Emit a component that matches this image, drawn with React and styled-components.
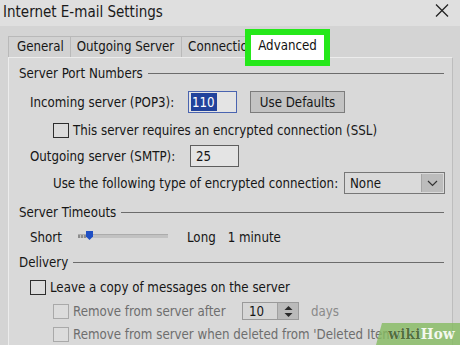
import React from 'react';
import styled, { createGlobalStyle } from 'styled-components';

const Global = createGlobalStyle`
	html, body {
		margin: 0;
		padding: 0;
		background: #d6d6d6;
	}
	body {
		font-family: "DejaVu Sans Condensed", "DejaVu Sans", sans-serif;
		font-stretch: condensed;
		font-size: 13.2px;
		color: #161616;
	}
`;

const Close = () => (
	<svg width="14" height="13" viewBox="0 0 14 13">
		<path d="M1 0.5 L13 12.5 M13 0.5 L1 12.5" stroke="#222" strokeWidth="1.3" fill="none" />
	</svg>
);

const Chevron = () => (
	<svg width="11" height="7" viewBox="0 0 11 7">
		<path d="M1 1 L5.5 5.5 L10 1" stroke="#333" strokeWidth="1.2" fill="none" />
	</svg>
);

const App = () => {
	return (
		<Window>
			<Global />
			<TitleBar>
				<Title>Internet E-mail Settings</Title>
				<CloseBtn>
					<Close />
				</CloseBtn>
			</TitleBar>

			<TabStrip>
				<Tab $pl={8} $pr={6}>General</Tab>
				<Tab $pl={6} $pr={7}>Outgoing Server</Tab>
				<Tab $pl={6} $pr={7}>Connection</Tab>
				<ActiveTab>Advanced</ActiveTab>
			</TabStrip>

			<Panel>
				<Legend>
					<span>Server Port Numbers</span>
					<Rule />
				</Legend>

				<Row $gap={7} $indent={11}>
					<Label $w={158}>Incoming server (POP3):</Label>
					<TextBox $w={49} $focused>
						<Selected>110</Selected>
					</TextBox>
					<Button>Use Defaults</Button>
				</Row>

				<Row $gap={6} $indent={34}>
					<Check />
					<CheckLabel>This server requires an encrypted connection (SSL)</CheckLabel>
				</Row>

				<Row $gap={4} $indent={11}>
					<Label $w={160}>Outgoing server (SMTP):</Label>
					<TextBox $w={49}>25</TextBox>
				</Row>

				<Row $gap={5} $indent={34}>
					<Label $w={291}>Use the following type of encrypted connection:</Label>
					<Select>
						<span>None</span>
						<DropBtn>
							<Chevron />
						</DropBtn>
					</Select>
				</Row>

				<Legend $gap={7}>
					<span>Server Timeouts</span>
					<Rule />
				</Legend>

				<Row $gap={3} $indent={11}>
					<Label $w={48}>Short</Label>
					<Slider>
						<Ticks />
						<Thumb $pos={8}>
							<svg width="7" height="9" viewBox="0 0 7 9">
								<path d="M0 0 H7 V5.5 L3.5 9 L0 5.5 Z" fill="#1f4fc4" />
							</svg>
						</Thumb>
					</Slider>
					<Label $ml={19}>Long</Label>
					<Label $ml={12}>1 minute</Label>
				</Row>

				<Legend $gap={3}>
					<span>Delivery</span>
					<Rule />
				</Legend>

				<Row $gap={3} $indent={11}>
					<Check />
					<CheckLabel>Leave a copy of messages on the server</CheckLabel>
				</Row>

				<Row $gap={2} $indent={34}>
					<Check $disabled />
					<CheckLabel $disabled $w={169}>
						Remove from server after
					</CheckLabel>
					<Spin>
						<span>10</span>
						<SpinBtns>
							<svg width="9" height="13" viewBox="0 0 9 13">
								<path d="M4.5 1 L8.5 5 H0.5 Z M4.5 12 L8.5 8 H0.5 Z" fill="#2a2a2a" />
							</svg>
						</SpinBtns>
					</Spin>
					<Faint>days</Faint>
				</Row>

				<Row $gap={1} $indent={34}>
					<Check $disabled />
					<CheckLabel $disabled>Remove from server when deleted from 'Deleted Items'</CheckLabel>
				</Row>
			</Panel>

			<Watermark>
				<b className="wiki">wiki</b>
				<b className="how">How</b>
			</Watermark>
		</Window>
	);
};

export default App;

const Window = styled.div`
	position: relative;
	width: 460px;
	height: 345px;
	overflow: hidden;
	display: flex;
	flex-direction: column;
	background: #d4d4d4;
`;

const TitleBar = styled.div`
	height: 26px;
	flex-shrink: 0;
	display: flex;
	align-items: center;
	padding: 0 11px 0 3px;
	background: #dfdfdf;
`;

const Title = styled.div`
	font-size: 15px;
	color: #1a1a1a;
	margin-top: -2px;
`;

const CloseBtn = styled.div`
	margin-left: auto;
	display: flex;
	margin-top: -5px;
`;

const TabStrip = styled.div`
	height: 31px;
	flex-shrink: 0;
	display: flex;
	align-items: flex-end;
	padding-left: 8px;
`;

const Tab = styled.div`
	box-sizing: border-box;
	height: 21px;
	display: flex;
	align-items: center;
	padding: 0 ${p => p.$pr}px 1px ${p => p.$pl}px;
	margin-right: -1px;
	background: #d2d2d2;
	border: solid 1px #b9b9b9;
	border-bottom: none;
	white-space: nowrap;
`;

const ActiveTab = styled.div`
	position: relative;
	z-index: 2;
	box-sizing: border-box;
	height: 37px;
	margin-left: -17px;
	margin-bottom: -9px;
	padding: 2px 7px 0 7px;
	background: #ffffff;
	border: solid 6px #25e81a;
	line-height: 18px;
	color: #111;
`;

const Panel = styled.div`
	flex: 1;
	margin: 0 7px 0 8px;
	padding: 4px 0 0 10px;
	background: #d9d9d9;
	border: solid 1px #ececec;
	border-right-color: #bdbdbd;
	border-bottom: none;
	display: flex;
	flex-direction: column;
`;

const Row = styled.div`
	height: 22px;
	flex-shrink: 0;
	display: flex;
	align-items: center;
	margin-top: ${p => p.$gap || 0}px;
	padding-left: ${p => p.$indent || 0}px;
	white-space: nowrap;
`;

const Legend = styled(Row)`
	padding-right: 8px;
`;

const Rule = styled.div`
	flex: 1;
	height: 1px;
	margin-left: 5px;
	background: #6c6c6c;
`;

const Label = styled.div`
	width: ${p => (p.$w ? `${p.$w}px` : 'auto')};
	margin-left: ${p => p.$ml || 0}px;
	flex-shrink: 0;
`;

const TextBox = styled.div`
	box-sizing: border-box;
	width: ${p => p.$w}px;
	height: 22px;
	display: flex;
	align-items: center;
	padding-left: ${p => (p.$focused ? 2 : 5)}px;
	background: #e4e4e4;
	border: solid 1px ${p => (p.$focused ? '#4a64b0' : '#5e5e5e')};
`;

const Selected = styled.span`
	display: flex;
	align-items: center;
	height: 18px;
	padding: 0 2px 0 1px;
	background: #22439c;
	color: #fff;
`;

const Button = styled.div`
	box-sizing: border-box;
	width: 95px;
	height: 22px;
	margin-left: 13px;
	display: flex;
	align-items: center;
	justify-content: center;
	background: #c3c3c3;
	border: solid 1px #7c7c7c;
`;

const Check = styled.div`
	box-sizing: border-box;
	width: 16px;
	height: 15px;
	flex-shrink: 0;
	background: #dcdcdc;
	border: solid 1px ${p => (p.$disabled ? '#a9a9a9' : '#2e2e2e')};
`;

const CheckLabel = styled.div`
	margin-left: 4px;
	width: ${p => (p.$w ? `${p.$w}px` : 'auto')};
	flex-shrink: 0;
	color: ${p => (p.$disabled ? '#6e6e6e' : '#161616')};
`;

const Select = styled.div`
	box-sizing: border-box;
	width: 101px;
	height: 22px;
	display: flex;
	align-items: center;
	justify-content: space-between;
	padding: 0 1px 0 5px;
	background: #dadada;
	border: solid 1px #777;
`;

const DropBtn = styled.div`
	width: 21px;
	height: 18px;
	display: flex;
	align-items: center;
	justify-content: center;
	background: #bcbcbc;
	border-left: solid 1px #a5a5a5;
`;

const Slider = styled.div`
	position: relative;
	width: 90px;
	height: 3px;
	margin-top: -2px;
	background: #c2c2c2;
	border-top: solid 1px #acacac;
`;

const Ticks = styled.div`
	width: 8px;
	height: 3px;
	background: repeating-linear-gradient(90deg, #8d8d8d 0 2px, transparent 2px 3px);
`;

const Thumb = styled.div`
	position: absolute;
	top: -4px;
	left: ${p => p.$pos}px;
	display: flex;
`;

const Spin = styled.div`
	box-sizing: border-box;
	width: 57px;
	height: 18px;
	display: flex;
	align-items: center;
	justify-content: space-between;
	padding-left: 6px;
	background: #d6d6d6;
	border: solid 1px #9a9a9a;
`;

const SpinBtns = styled.div`
	width: 20px;
	height: 16px;
	display: flex;
	align-items: center;
	justify-content: center;
	background: #bababa;
	border-left: solid 1px #a0a0a0;
`;

const Faint = styled.div`
	margin-left: 12px;
	color: #8a8a8a;
`;

const Watermark = styled.div`
	position: absolute;
	right: 0;
	bottom: 0;
	width: 84px;
	height: 22px;
	display: flex;
	align-items: center;
	justify-content: flex-end;
	padding-right: 5px;
	box-sizing: border-box;
	background: rgba(132, 186, 96, 0.8);
	clip-path: polygon(6px 0, 100% 0, 100% 100%, 0 100%);
	font-family: "DejaVu Serif", "Liberation Serif", serif;
	font-size: 15px;
	letter-spacing: 0.3px;
	.wiki {
		color: #52703c;
		text-shadow: 0 0 1px #e8f3df;
	}
	.how {
		color: #f4f8ef;
	}
`;
